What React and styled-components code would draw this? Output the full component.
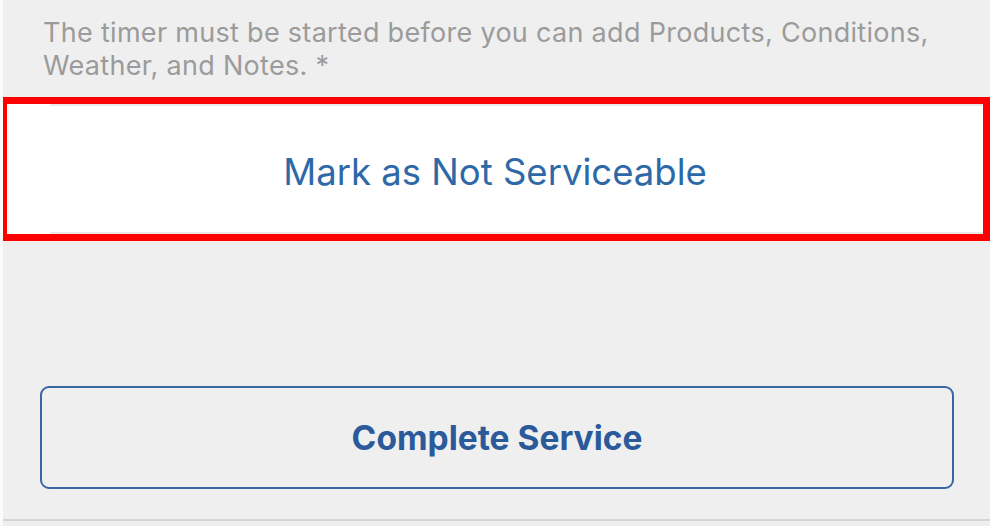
import styled, { createGlobalStyle } from "styled-components";

const GlobalStyle = createGlobalStyle`
    html, body {
        margin: 0;
        padding: 0;
        background: #efefef;
    }
    body {
        font-family: "Inter", "Liberation Sans", sans-serif;
        -webkit-font-smoothing: antialiased;
    }
`

function App() {
    return (
        <>
            <GlobalStyle />
            <Page>
                <Note>
                    The timer must be started before you can add Products, Conditions,
                    Weather, and Notes. *
                </Note>
                <Highlight>
                    <Row>
                        <Hairline />
                        <RowLabel>Mark as Not Serviceable</RowLabel>
                        <Hairline />
                    </Row>
                </Highlight>
                <Footer>
                    <OutlineButton>Complete Service</OutlineButton>
                </Footer>
                <BottomRule />
            </Page>
        </>
    );
}

export default App;

const Page = styled.div`
    height: 526px;
    display: flex;
    flex-direction: column;
    border-left: 3px solid #fbfbfb;
    box-sizing: border-box;
    overflow: hidden;
`

const Note = styled.p`
    margin: 0;
    padding: 16px 30px 0 40px;
    height: 97px;
    box-sizing: border-box;
    font-size: 27px;
    line-height: 33px;
    color: #9b9b9b;
    letter-spacing: 0.3px;
`

const Highlight = styled.div`
    margin-left: -3px;
    border: 7px solid #ff0000;
    background: #ffffff;
`

const Row = styled.div`
    height: 130px;
    display: flex;
    flex-direction: column;
`

const Hairline = styled.div`
    height: 2px;
    margin-left: 43px;
    background: #e9e9e9;
`

const RowLabel = styled.div`
    flex: 1;
    display: flex;
    align-items: center;
    justify-content: center;
    font-size: 36.5px;
    color: #2e69a7;
    padding-top: 6px;
`

const Footer = styled.div`
    flex: 1;
    display: flex;
    align-items: flex-end;
    padding: 0 36px 30px 37px;
`

const OutlineButton = styled.button`
    flex: 1;
    height: 103px;
    border: 2px solid #3a66a4;
    border-radius: 9px;
    background: transparent;
    font-family: "Inter", "Liberation Sans", sans-serif;
    font-size: 33.5px;
    font-weight: 700;
    color: #2b5a9b;
    padding: 0;
`

const BottomRule = styled.div`
    height: 7px;
    border-top: 2px solid #d5d5d5;
    box-sizing: border-box;
    background: #efefef;
`
